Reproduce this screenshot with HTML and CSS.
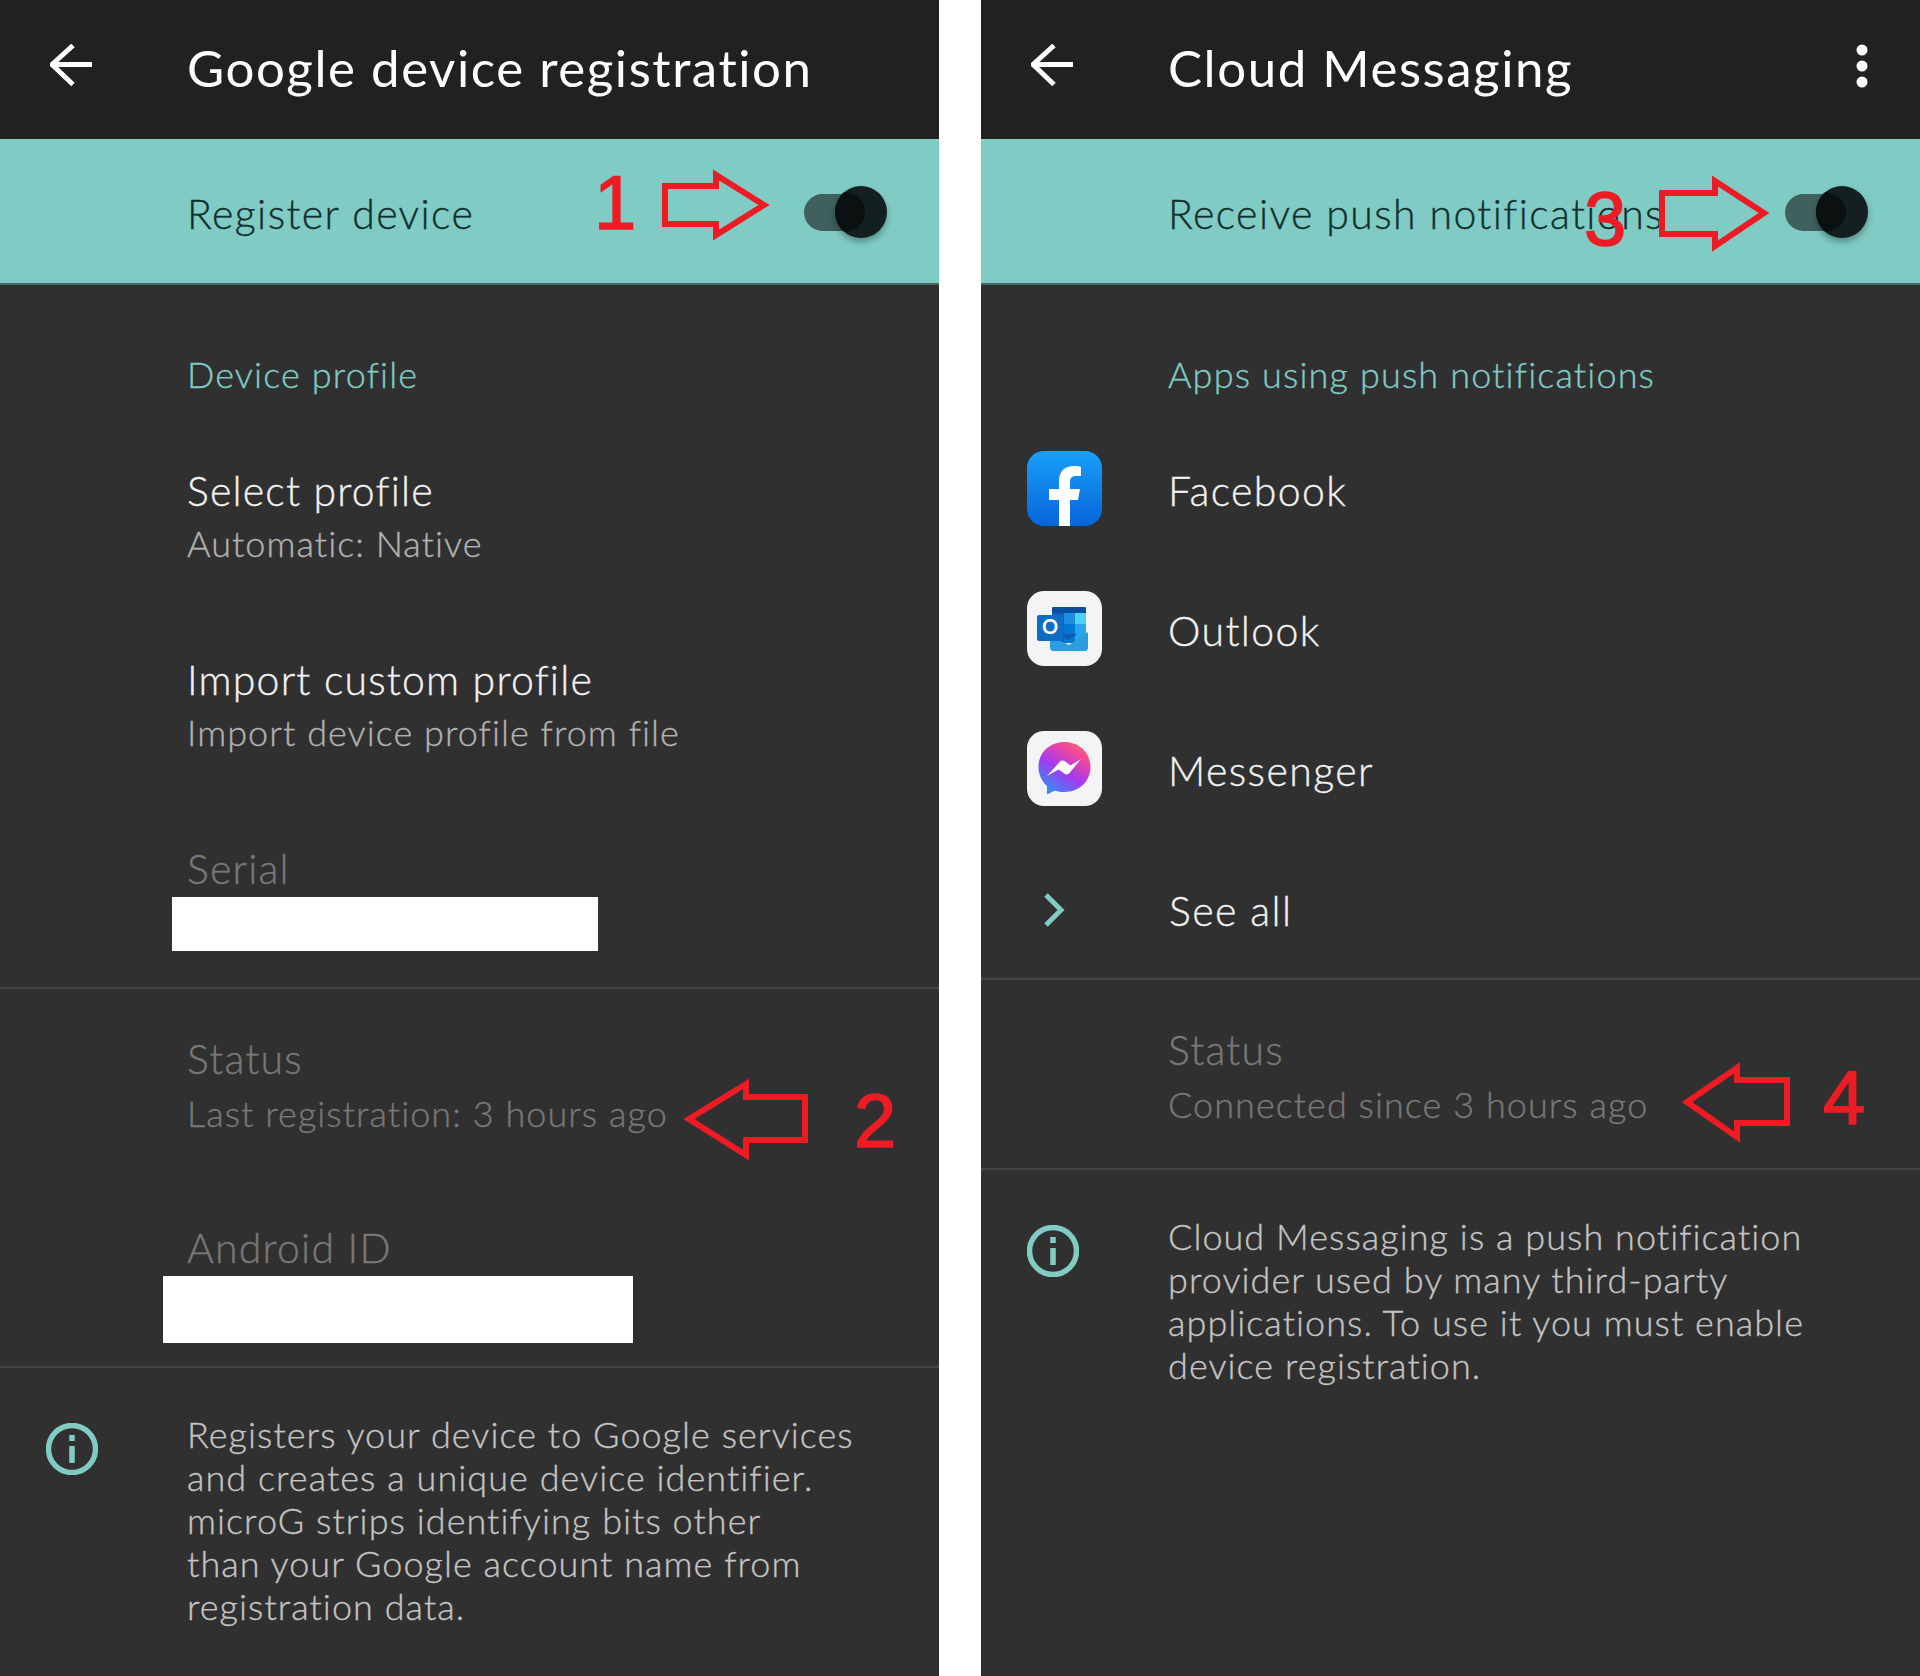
FILE: index.html
```html
<!DOCTYPE html>
<html lang="en">
<head>
    <meta charset="UTF-8">
    <title>microG settings</title>
    <link rel="stylesheet" href="styles.css">
</head>
<body>
    <div class="screens">
        <div class="screen">
            <div class="app-bar">
                <svg class="back-icon" viewBox="0 0 44 44"><path d="M42 20.500H3M23 1.500L2 20.500L23 40.500"/></svg>
                <h1>Google device registration</h1>
            </div>
            <div class="switch-bar">
                <span>Register device</span>
                <div class="switch"><div class="switch-thumb"></div></div>
            </div>
            <div class="section-title">Device profile</div>
            <div class="pref first-pref">
                <div class="pref-title">Select profile</div>
                <div class="pref-sub">Automatic: Native</div>
            </div>
            <div class="pref">
                <div class="pref-title">Import custom profile</div>
                <div class="pref-sub">Import device profile from file</div>
            </div>
            <div class="pref disabled">
                <div class="pref-title">Serial</div>
                <div class="redact redact-serial"></div>
            </div>
            <div class="divider divider-serial"></div>
            <div class="pref disabled status-pref">
                <div class="pref-title">Status</div>
                <div class="pref-sub">Last registration: 3 hours ago</div>
            </div>
            <div class="pref disabled android-pref">
                <div class="pref-title">Android ID</div>
                <div class="redact redact-id"></div>
            </div>
            <div class="divider divider-id"></div>
            <div class="info">
                <svg class="info-icon" viewBox="0 0 52 52"><circle cx="26" cy="26" r="23.500"/><path d="M26 23V40M26 12V18"/></svg>
                <p>Registers your device to Google services<br>and creates a unique device identifier.<br>microG strips identifying bits other<br>than your Google account name from<br>registration data.</p>
            </div>

            <svg class="mark arrow-1" viewBox="0 0 112 76"><path d="M5 18H56V7L104 37L56 67V56H5Z"/></svg>
            <div class="mark num num-1">1</div>
            <svg class="mark arrow-2" viewBox="0 0 128 88"><path d="M123 22H64V9L7 44L64 80V65H123Z"/></svg>
            <div class="mark num num-2">2</div>
        </div>

        <div class="screen">
            <div class="app-bar">
                <svg class="back-icon" viewBox="0 0 44 44"><path d="M42 20.500H3M23 1.500L2 20.500L23 40.500"/></svg>
                <h1>Cloud Messaging</h1>
                <svg class="more-icon" viewBox="0 0 14 46"><circle cx="7" cy="7" r="5.500"/><circle cx="7" cy="23" r="5.500"/><circle cx="7" cy="39" r="5.500"/></svg>
            </div>
            <div class="switch-bar">
                <span>Receive push notifications</span>
                <div class="switch"><div class="switch-thumb"></div></div>
            </div>
            <div class="section-title">Apps using push notifications</div>
            <div class="app-list">
                <div class="app-row">
                    <svg class="app-icon" viewBox="0 0 75 75">
                        <defs>
                            <linearGradient id="fb" x1="0" y1="0" x2="0" y2="1"><stop offset="0" stop-color="#18a0fb"/><stop offset="1" stop-color="#0864d8"/></linearGradient>
                            <clipPath id="tile"><rect width="75" height="75" rx="17"/></clipPath>
                        </defs>
                        <rect width="75" height="75" rx="17" fill="url(#fb)"/>
                        <path clip-path="url(#tile)" fill="#fff" d="M32 75V49H22V38H32V30C32 20 38 15 47 15C50 15 52 15 54 16V25H49C45 25 43 27 43 31V38H53L51 49H43V75Z"/>
                    </svg>
                    <span>Facebook</span>
                </div>
                <div class="app-row">
                    <svg class="app-icon" viewBox="0 0 75 75">
                        <rect width="75" height="75" rx="17" fill="#f4f4f6"/>
                        <rect x="25" y="16" width="34" height="7" rx="1" fill="#0a4f9e"/>
                        <rect x="25" y="22" width="12" height="30" fill="#0364b8"/>
                        <rect x="37" y="22" width="11" height="11" fill="#1a8fe0"/>
                        <rect x="48" y="22" width="11" height="11" fill="#4fd0f8"/>
                        <rect x="37" y="33" width="11" height="19" fill="#0078d4"/>
                        <rect x="48" y="33" width="11" height="19" fill="#28a8ea"/>
                        <path d="M31 43H50L41 49Z" fill="#0a5fb0"/>
                        <path d="M23 45L42 54L61 41V57C61 58.500 60 60 58 60H26C24.500 60 23 58.500 23 57Z" fill="#2a9fe0"/>
                        <rect x="10" y="24" width="26" height="26" rx="2" fill="#0f6cc4"/>
                        <text class="outlook-o" x="23" y="43" text-anchor="middle">O</text>
                    </svg>
                    <span>Outlook</span>
                </div>
                <div class="app-row">
                    <svg class="app-icon" viewBox="0 0 75 75">
                        <defs>
                            <linearGradient id="ms" x1="0.15" y1="1" x2="0.8" y2="0"><stop offset="0" stop-color="#1e9bf5"/><stop offset="0.45" stop-color="#a23af0"/><stop offset="0.8" stop-color="#f2479c"/><stop offset="1" stop-color="#f96a6a"/></linearGradient>
                        </defs>
                        <rect width="75" height="75" rx="17" fill="#f4f4f6"/>
                        <path fill="url(#ms)" d="M37.500 11C22.500 11 11.500 22 11.500 36C11.500 44 15 50.500 20 55V63.500L28 59.500C31 60.500 34 61 37.500 61C52.500 61 63.500 50 63.500 36C63.500 22 52.500 11 37.500 11Z"/>
                        <path fill="#fff" d="M20 45L33 30.500C34 29.500 36 29 37.500 30L43.500 34.500L54 28L42 42.500C41 43.500 39 43.700 38 43L31.500 38.500Z"/>
                    </svg>
                    <span>Messenger</span>
                </div>
                <div class="app-row">
                    <svg class="chevron" viewBox="0 0 22 36"><path d="M3 3L18 18L3 33"/></svg>
                    <span>See all</span>
                </div>
            </div>
            <div class="divider divider-apps"></div>
            <div class="pref disabled status-pref">
                <div class="pref-title">Status</div>
                <div class="pref-sub">Connected since 3 hours ago</div>
            </div>
            <div class="divider divider-status"></div>
            <div class="info">
                <svg class="info-icon" viewBox="0 0 52 52"><circle cx="26" cy="26" r="23.500"/><path d="M26 23V40M26 12V18"/></svg>
                <p>Cloud Messaging is a push notification<br>provider used by many third-party<br>applications. To use it you must enable<br>device registration.</p>
            </div>

            <svg class="mark arrow-3" viewBox="0 0 116 82"><path d="M3 19H56V7L105 39L56 72V60H3Z"/></svg>
            <div class="mark num num-3">3</div>
            <svg class="mark arrow-4" viewBox="0 0 112 86"><path d="M106 19H56V7L6 41L56 76V62H106Z"/></svg>
            <div class="mark num num-4">4</div>
        </div>
    </div>
</body>
</html>
```
FILE: styles.css
```css
body {
    margin: 0;
    background: #fff;
    font-family: 'Lato', 'Liberation Sans', sans-serif;
    font-weight: 300;
    -webkit-text-stroke: 0.35px;
}
.screens {
    display: flex;
    gap: 42px;
    height: 1676px;
    overflow: hidden;
}
.screen {
    position: relative;
    flex: 1;
    background: #303030;
    color: #f2f2f2;
}
.app-bar {
    display: flex;
    align-items: center;
    height: 139px;
    background: #212121;
    padding-left: 50px;
    box-sizing: border-box;
}
.back-icon {
    width: 44px;
    height: 44px;
    margin-right: 93px;
    margin-top: -8px;
    flex: none;
    fill: none;
    stroke: #fff;
    stroke-width: 5;
}
.app-bar h1 {
    margin: 0;
    padding-bottom: 5px;
    font-size: 51px;
    font-weight: 400;
    letter-spacing: 1.55px;
    color: #fff;
    -webkit-text-stroke: 0;
}
.more-icon {
    width: 14px;
    height: 46px;
    margin-left: auto;
    margin-right: 51px;
    margin-top: -8px;
    fill: #fff;
}
.switch-bar {
    display: flex;
    align-items: center;
    justify-content: space-between;
    height: 146px;
    background: #80cbc4;
    border-bottom: 2px solid #3f6b67;
    box-sizing: border-box;
    padding: 0 0 0 187px;
    color: #10302d;
    font-size: 41px;
    letter-spacing: 1.4px;
}
.switch-bar span {
    padding-top: 5px;
}
.switch {
    position: relative;
    width: 60px;
    height: 37px;
    margin-right: 75px;
    margin-top: 3px;
    border-radius: 19px;
    background: #3f605d;
}
.switch-thumb {
    position: absolute;
    top: -8px;
    left: 31px;
    width: 52px;
    height: 52px;
    border-radius: 50%;
    overflow: hidden;
    background: #14201f;
    box-shadow: 0 4px 6px rgba(0, 0, 0, 0.3);
}
.switch-thumb::after {
    content: "";
    position: absolute;
    top: 6px;
    left: -14px;
    width: 44px;
    height: 40px;
    border-radius: 50%;
    background: #0a1110;
}
.section-title {
    margin: 67px 0 0 187px;
    font-size: 36px;
    line-height: 44px;
    letter-spacing: 1.15px;
    color: #80cbc4;
}
.pref {
    margin: 83px 0 0 187px;
    line-height: 53px;
}
.first-pref {
    margin-top: 68px;
}
.pref-title {
    font-size: 41px;
    letter-spacing: 1.2px;
}
.pref-sub {
    font-size: 36px;
    letter-spacing: 1.05px;
    color: #b2b2b2;
}
.disabled .pref-title,
.disabled .pref-sub {
    color: #787878;
}
.status-pref {
    margin-top: 43px;
}
.status-pref .pref-sub {
    margin-top: 2px;
}
.android-pref {
    margin-top: 81px;
}
.redact {
    margin-top: 2px;
    background: #fff;
}
.redact-serial {
    width: 426px;
    height: 54px;
    margin-left: -15px;
}
.redact-id {
    width: 470px;
    height: 67px;
    margin-left: -24px;
}
.divider {
    height: 2px;
    background: #454545;
}
.divider-serial {
    margin-top: 36px;
}
.divider-id {
    margin-top: 23px;
}
.divider-apps {
    margin-top: -2px;
}
.divider-status {
    margin-top: 37px;
}
.app-list {
    margin-top: 24px;
}
.app-row {
    display: flex;
    align-items: center;
    height: 140px;
    padding-left: 46px;
    font-size: 41px;
    letter-spacing: 1.4px;
}
.app-icon {
    width: 75px;
    height: 75px;
    margin-right: 66px;
    margin-top: -3px;
    flex: none;
}
.outlook-o {
    font-family: 'Lato', sans-serif;
    font-size: 20px;
    font-weight: 700;
    letter-spacing: 0;
    fill: #fff;
    -webkit-text-stroke: 0;
}
.chevron {
    width: 22px;
    height: 36px;
    margin: 0 104px 0 16px;
    flex: none;
    fill: none;
    stroke: #80cbc4;
    stroke-width: 5;
}
.info {
    display: flex;
    margin-top: 45px;
    padding-left: 46px;
}
.info-icon {
    width: 52px;
    height: 52px;
    margin: 10px 89px 0 0;
    flex: none;
    fill: none;
    stroke: #80cbc4;
    stroke-width: 5.500;
}
.info p {
    margin: 0;
    font-size: 36px;
    line-height: 43px;
    letter-spacing: 1.05px;
    color: #c4c4c4;
}
/* red notes drawn over the screenshots */
.mark {
    position: absolute;
}
svg.mark {
    fill: none;
    stroke: #ed1c24;
    stroke-width: 6;
    overflow: visible;
}
.num {
    color: #ed1c24;
    font-family: 'Liberation Sans', sans-serif;
    font-size: 76px;
    line-height: 76px;
    font-weight: 400;
    -webkit-text-stroke: 1.5px;
}
.arrow-1 { left: 660px; top: 168px; width: 112px; height: 76px; }
.num-1 { left: 594px; top: 165px; }
.arrow-2 { left: 682px; top: 1075px; width: 128px; height: 88px; }
.num-2 { left: 854px; top: 1083px; }
.arrow-3 { left: 678px; top: 174px; width: 116px; height: 82px; }
.num-3 { left: 603px; top: 181px; }
.arrow-4 { left: 700px; top: 1061px; width: 112px; height: 86px; }
.num-4 { left: 842px; top: 1060px; }
```
